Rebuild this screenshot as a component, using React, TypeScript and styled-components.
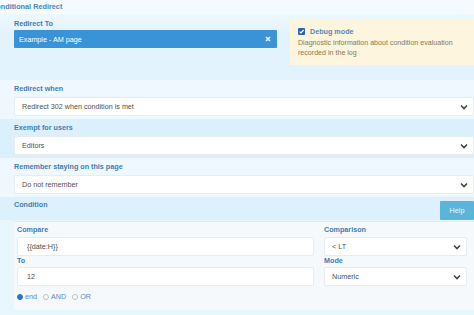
import styled, { createGlobalStyle } from "styled-components";

const GlobalStyle = createGlobalStyle`
  html, body {
    margin: 0;
    padding: 0;
    background: #eaf6fd;
    font-family: "Liberation Sans", Arial, sans-serif;
    overflow: hidden;
  }
  * {
    box-sizing: border-box;
  }
`;

const Chevron = () => (
  <svg width="8" height="6" viewBox="0 0 8 6">
    <path d="M1 1.5 L4 4.5 L7 1.5" fill="none" stroke="#444" strokeWidth="1.6" />
  </svg>
);

const Select = ({ value }: { value: string }) => (
  <SelectBox>
    <span>{value}</span>
    <Chevron />
  </SelectBox>
);

const App = () => {
  return (
    <Page>
      <GlobalStyle />
      <TitleBar>Conditional Redirect</TitleBar>

      <TopSection>
        <RedirectCol>
          <Label>Redirect To</Label>
          <Chosen>
            <span>Example - AM page</span>
            <svg width="6" height="6" viewBox="0 0 6 6">
              <path d="M1 1 L5 5 M5 1 L1 5" stroke="#e8f2fb" strokeWidth="1.6" />
            </svg>
          </Chosen>
        </RedirectCol>
        <DebugBox>
          <DebugTitle>
            <Check>
              <svg width="7" height="7" viewBox="0 0 7 7">
                <path d="M1.5 3.6 L3 5 L5.6 2" fill="none" stroke="#fff" strokeWidth="1.2" />
              </svg>
            </Check>
            Debug mode
          </DebugTitle>
          <DebugText>
            Diagnostic information about condition evaluation recorded in the log
          </DebugText>
        </DebugBox>
      </TopSection>

      <Row $tone="light">
        <Label>Redirect when</Label>
        <Select value="Redirect 302 when condition is met" />
      </Row>
      <Row $tone="dark">
        <Label>Exempt for users</Label>
        <Select value="Editors" />
      </Row>
      <Row $tone="light">
        <Label>Remember staying on this page</Label>
        <Select value="Do not remember" />
      </Row>

      <ConditionHead>
        <Label>Condition</Label>
        <HelpButton>Help</HelpButton>
      </ConditionHead>

      <ConditionBody>
        <ConditionPanel>
          <FieldGrid>
            <Field>
              <Label>Compare</Label>
              <TextInput>{"{{date:H}}"}</TextInput>
            </Field>
            <Field>
              <Label>Comparison</Label>
              <Select value="< LT" />
            </Field>
            <Field>
              <Label>To</Label>
              <TextInput>12</TextInput>
            </Field>
            <Field>
              <Label>Mode</Label>
              <Select value="Numeric" />
            </Field>
          </FieldGrid>
          <Radios>
            <RadioItem>
              <Radio $on />
              end
            </RadioItem>
            <RadioItem>
              <Radio />
              AND
            </RadioItem>
            <RadioItem>
              <Radio />
              OR
            </RadioItem>
          </Radios>
        </ConditionPanel>
      </ConditionBody>
    </Page>
  );
};

const Page = styled.div`
  width: 474px;
  height: 315px;
  display: flex;
  flex-direction: column;
  overflow: hidden;
`;

const TitleBar = styled.div`
  height: 14px;
  margin-left: -9px;
  font-size: 7.3px;
  font-weight: bold;
  line-height: 14px;
  color: #4f86b3;
  background: #f4fafe;
`;

const TopSection = styled.div`
  height: 66px;
  display: flex;
  align-items: flex-start;
  gap: 13px;
  padding: 5px 0 0 14px;
  background: linear-gradient(#eef8fe, #e2f3fd 30%);
`;

const RedirectCol = styled.div`
  width: 263px;
  display: flex;
  flex-direction: column;
  gap: 1px;
`;

const Label = styled.div`
  font-size: 7.2px;
  font-weight: bold;
  color: #3f7db5;
  line-height: 10px;
`;

const Chosen = styled.div`
  height: 18px;
  display: flex;
  align-items: center;
  justify-content: space-between;
  padding: 0 6px 0 5px;
  background: #3993d6;
  color: #fff;
  font-size: 7.2px;
  border-radius: 1px;
`;

const DebugBox = styled.div`
  flex: 1;
  height: 45px;
  margin-top: 1px;
  padding: 6px 0 0 8px;
  background: #fdf5dd;
`;

const DebugTitle = styled.div`
  display: flex;
  align-items: center;
  gap: 5px;
  height: 10px;
  font-size: 7.2px;
  font-weight: bold;
  color: #5b88b3;
  margin-bottom: 2px;
`;

const Check = styled.span`
  width: 7px;
  height: 7px;
  display: flex;
  background: #2463b8;
  border-radius: 1px;
`;

const DebugText = styled.div`
  font-size: 7.1px;
  line-height: 10px;
  color: #8b7a55;
  width: 170px;
`;

const Row = styled.div<{ $tone: "light" | "dark" }>`
  display: flex;
  flex-direction: column;
  gap: 3px;
  padding: 4px 0 3px 14px;
  background: ${(p) => (p.$tone === "dark" ? "#dbf0fc" : "#eef8fe")};
`;

const SelectBox = styled.div`
  height: 19px;
  display: flex;
  align-items: center;
  justify-content: space-between;
  padding: 0 5px 0 7px;
  background: #fff;
  border: 1px solid #e6ecef;
  border-radius: 2px;
  font-size: 7.2px;
  color: #4f4f4f;
`;

const ConditionHead = styled.div`
  height: 23px;
  display: flex;
  align-items: flex-start;
  justify-content: space-between;
  padding: 3px 0 0 14px;
  background: #dcf1fc;
`;

const HelpButton = styled.div`
  width: 34px;
  height: 19px;
  margin-top: 1px;
  display: flex;
  align-items: center;
  justify-content: center;
  background: #5bb4da;
  color: #eef8fd;
  font-size: 7.2px;
  border-radius: 1px;
`;

const ConditionBody = styled.div`
  flex: 1;
  padding: 1px 0 5px 14px;
  background: #e8f6fd;
`;

const ConditionPanel = styled.div`
  height: 100%;
  padding: 3px 7px 0 3px;
  background: #f5f9fb;
  border-top: 1px solid #e4eaee;
`;

const FieldGrid = styled.div`
  display: grid;
  grid-template-columns: 297px 1fr;
  column-gap: 10px;
`;

const Field = styled.div`
  display: flex;
  flex-direction: column;
  gap: 1px;

  &:nth-child(-n + 2) {
    gap: 2px;
  }
`;

const TextInput = styled.div`
  height: 19px;
  display: flex;
  align-items: center;
  padding-left: 9px;
  background: #fff;
  border: 1px solid #e6ecef;
  border-radius: 2px;
  font-size: 7.2px;
  color: #4f4f4f;
`;

const Radios = styled.div`
  display: flex;
  gap: 6px;
  margin-top: 6px;
  font-size: 7.2px;
  color: #5a8dbd;
`;

const RadioItem = styled.label`
  display: flex;
  align-items: center;
  gap: 2px;
`;

const Radio = styled.span<{ $on?: boolean }>`
  width: 6px;
  height: 6px;
  border-radius: 50%;
  border: 1px solid ${(p) => (p.$on ? "#2a73d0" : "#b8c2c8")};
  background: ${(p) => (p.$on ? "#2a73d0" : "#fff")};
`;

export default App;
